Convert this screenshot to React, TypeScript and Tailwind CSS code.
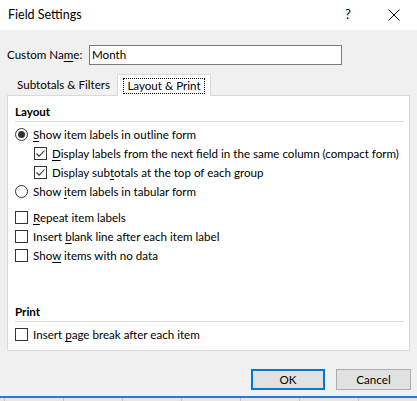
import React from "react";

// Underlines the access-key letter inside a label
function Keyed({ text, at }: { text: string; at: number }) {
  return (
    <>
      {text.slice(0, at)}
      <span className="underline underline-offset-2">{text[at]}</span>
      {text.slice(at + 1)}
    </>
  );
}

function Radio({ checked }: { checked?: boolean }) {
  return (
    <span className="w-[13px] h-[13px] rounded-full border border-[#333] bg-white flex items-center justify-center shrink-0">
      {checked && <span className="w-[7px] h-[7px] rounded-full bg-[#333]" />}
    </span>
  );
}

function Check({ checked }: { checked?: boolean }) {
  return (
    <span className="w-[13px] h-[13px] border border-[#333] bg-white flex items-center justify-center shrink-0">
      {checked && (
        <svg width="11" height="11" viewBox="0 0 11 11">
          <path d="M1.5 5.5 L4.2 8.2 L9.5 2.5" fill="none" stroke="#333" strokeWidth="1.1" />
        </svg>
      )}
    </span>
  );
}

function Row({ children, indent }: { children: React.ReactNode; indent?: boolean }) {
  return (
    <div className={"h-[19px] flex items-center gap-[5px] whitespace-nowrap " + (indent ? "pl-[19px]" : "")}>
      {children}
    </div>
  );
}

function Section({ title, children }: { title: string; children: React.ReactNode }) {
  return (
    <div>
      <div className="h-[18px] flex items-center font-bold">{title}</div>
      <div className="h-px bg-[#dcdcdc] mr-[5px]" />
      <div className="mt-[3px]">{children}</div>
    </div>
  );
}

export default function App() {
  return (
    <div
      className="w-[417px] h-[401px] overflow-hidden flex flex-col text-[11.6px] text-black bg-[#f0f0f0] whitespace-nowrap"
      style={{ fontFamily: 'Lato, "Liberation Sans", sans-serif' }}
    >
      {/* title bar */}
      <div className="h-[30px] bg-white flex items-center pl-[8px] shrink-0">
        <span className="flex-1 text-[12.5px]">Field Settings</span>
        <span className="w-[46px] text-center text-[13px]">?</span>
        <span className="w-[46px] flex justify-center">
          <svg width="12" height="12" viewBox="0 0 12 12">
            <path d="M0.5 0.5 L11.5 11.5 M11.5 0.5 L0.5 11.5" stroke="#000" strokeWidth="1" />
          </svg>
        </span>
      </div>

      <div className="flex-1 flex flex-col px-[7px]">
        {/* custom name */}
        <div className="mt-[15px] flex items-center h-[20px]">
          <span className="w-[82px]">
            Custom Na<span className="underline underline-offset-2">m</span>e:
          </span>
          <div className="w-[253px] h-[20px] border border-[#7a7a7a] bg-white flex items-center px-[2px]">
            Month
          </div>
        </div>

        {/* tabs */}
        <div className="mt-[8px] flex items-end h-[22px] pl-[1px]">
          <div className="w-[109px] h-[20px] flex items-center pl-[9px]">Subtotals &amp; Filters</div>
          <div className="relative z-10 -mb-px w-[94px] h-[22px] bg-white border border-b-0 border-[#d9d9d9] flex items-center justify-center">
            <span className="px-[3px] h-[16px] flex items-center border border-dotted border-black">
              Layout &amp; Print
            </span>
          </div>
        </div>

        {/* panel */}
        <div className="h-[256px] border border-[#d9d9d9] bg-white pl-[7px] pt-[7px] flex flex-col">
          <Section title="Layout">
            <Row>
              <Radio checked />
              <span><Keyed text="Show item labels in outline form" at={0} /></span>
            </Row>
            <Row indent>
              <Check checked />
              <span>
                <Keyed text="Display labels from the next field in the same column (compact form)" at={0} />
              </span>
            </Row>
            <Row indent>
              <Check checked />
              <span><Keyed text="Display subtotals at the top of each group" at={11} /></span>
            </Row>
            <Row>
              <Radio />
              <span><Keyed text="Show item labels in tabular form" at={5} /></span>
            </Row>
          </Section>

          <div className="mt-[7px]">
            <Row>
              <Check />
              <span><Keyed text="Repeat item labels" at={0} /></span>
            </Row>
            <Row>
              <Check />
              <span><Keyed text="Insert blank line after each item label" at={7} /></span>
            </Row>
            <Row>
              <Check />
              <span><Keyed text="Show items with no data" at={3} /></span>
            </Row>
          </div>

          <div className="mt-[38px]">
            <Section title="Print">
              <Row>
                <Check />
                <span><Keyed text="Insert page break after each item" at={7} /></span>
              </Row>
            </Section>
          </div>
        </div>

        {/* buttons */}
        <div className="mt-[18px] flex justify-end gap-[11px] mr-[-1px]">
          <button className="w-[74px] h-[21px] bg-[#e1e1e1] border-2 border-[#0078d7] flex items-center justify-center">
            OK
          </button>
          <button className="w-[75px] h-[21px] bg-[#e1e1e1] border border-[#adadad] flex items-center justify-center">
            Cancel
          </button>
        </div>
      </div>

      {/* worksheet peeking below the dialog */}
      <div className="h-[5px] shrink-0 flex flex-col">
        <div className="h-[2px] bg-[#2b7bd6]" />
        <div className="flex-1 flex bg-[#e6e6e6]">
          {[0, 1, 2, 3, 4, 5, 6].map((i) => (
            <div key={i} className="w-[64px] border-l border-[#c6c6c6] first:ml-[4px]" />
          ))}
        </div>
      </div>
    </div>
  );
}
